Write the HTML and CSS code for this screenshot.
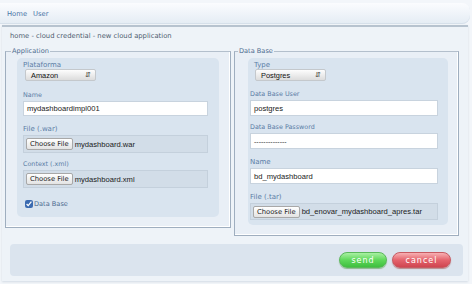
FILE: index.html
```html
<!DOCTYPE html>
<html lang="en">
<head>
    <meta charset="UTF-8">
    <title>New cloud application</title>
    <link rel="stylesheet" href="styles.css">
</head>
<body>
    <div class="menu">
        <a href="#">Home</a>
        <a href="#">User</a>
    </div>
    <div class="page">
        <div class="crumbs">home - cloud credential - new cloud application</div>
        <div class="columns">
            <fieldset class="box box-app">
                <legend>Application</legend>
                <div class="panel">
                    <label class="lbl big">Plataforma</label>
                    <div class="select"><span>Amazon</span><i>&#8693;</i></div>
                    <label class="lbl">Name</label>
                    <div class="input">mydashboardimpl001</div>
                    <label class="lbl big">File (.war)</label>
                    <div class="file"><button>Choose File</button><span>mydashboard.war</span></div>
                    <label class="lbl">Context (.xml)</label>
                    <div class="file"><button>Choose File</button><span>mydashboard.xml</span></div>
                    <label class="check"><input type="checkbox" checked><span>Data Base</span></label>
                </div>
            </fieldset>
            <fieldset class="box box-db">
                <legend>Data Base</legend>
                <div class="panel">
                    <label class="lbl big">Type</label>
                    <div class="select"><span>Postgres</span><i>&#8693;</i></div>
                    <label class="lbl">Data Base User</label>
                    <div class="input">postgres</div>
                    <label class="lbl">Data Base Password</label>
                    <div class="input pwd">--------------</div>
                    <label class="lbl big">Name</label>
                    <div class="input">bd_mydashboard</div>
                    <label class="lbl big">File (.tar)</label>
                    <div class="file"><button>Choose File</button><span>bd_enovar_mydashboard_apres.tar</span></div>
                </div>
            </fieldset>
        </div>
        <div class="actions">
            <button class="btn btn-send">send</button>
            <button class="btn btn-cancel">cancel</button>
        </div>
    </div>
</body>
</html>
```

FILE: styles.css
```css
/* base */
*{margin:0;padding:0;box-sizing:border-box}
body{font-family:'DejaVu Sans',Verdana,sans-serif;background:#f3f6fa;color:#333;width:472px;height:284px;overflow:hidden}
/* top menu */
.menu{height:21px;margin:3px 2px 0 0;background:linear-gradient(#fbfcfe,#e4ecf4);border-radius:0 8px 8px 0;box-shadow:inset 0 -1px 0 #d6e0ea;display:flex;align-items:center;gap:6px;padding-left:7px}
.menu a{color:#4a74a6;font-size:6.8px;text-decoration:none}
.page{margin:1px 4px 0 2px;border-top:2px solid #b7c3cf;background:#eef3f8;height:256px;box-shadow:0 1px 2px #d2dae3}
.crumbs{font-size:6.8px;color:#4f5d70;padding:5px 0 0 8px;height:20px}
/* two fieldsets */
.columns{display:flex;align-items:flex-start;gap:3px;padding-left:3px}
.box{border:1px solid #9faebf;border-top-color:#b3bfcc;box-shadow:inset -1px -1px 0 #fff;background:#e9eff6;padding:0}
.box legend{font-size:6.6px;color:#4e6c8f;margin-left:5px;padding:0 1px}
.box-app{width:226px;height:181px}
.box-db{width:225px;height:189px}
.box-db legend{margin-left:3px}
.box-app .panel{margin:3px 11px 0 11px}
.box-db .panel{margin:3px 10px 0 13px}
.panel{background:#d9e4ef;border-radius:5px;padding:2px 11px 9px 6px;display:flex;flex-direction:column;align-items:flex-start}
.box-db .panel{padding:3px 10px 5px 2px}
.lbl{font-size:6.4px;color:#5b7da6;margin:7px 0 2px 0;display:block;line-height:8px}
.lbl.big{font-size:7px;margin-top:9px}
.select+.lbl{margin-top:10px}
.panel .lbl:first-child{margin:1px 0 0 0}
.box-db .panel .lbl:first-child{margin:0 0 0 4px}
.box-db .select{margin-left:5px}
.box-db .select+.lbl{margin-top:9px}
/* fake select */
.select{width:71px;height:12px;margin-left:2px;background:linear-gradient(#fdfdfd,#dcdcdc);border:1px solid #c4c8cc;border-radius:2px;display:flex;align-items:center;justify-content:space-between;padding:0 4px 0 5px;font-family:'Liberation Sans',Arial,sans-serif;font-size:7.4px;color:#111}
.select i{font-style:normal;font-size:7px;color:#333}
/* text inputs */
.input{width:100%;height:16px;background:#fff;border:1px solid #c8d3de;font-family:'Liberation Sans',Arial,sans-serif;font-size:7.6px;color:#1a1a1a;padding:0 3px;display:flex;align-items:center}
.box-app .input{height:15px}
.input.pwd{font-size:7px;color:#333}
/* file inputs */
.file{width:100%;height:18px;background:#d2dde8;border:1px solid #c4d0dc;display:flex;align-items:center;padding-left:2px;gap:2px;font-family:'Liberation Sans',Arial,sans-serif;font-size:7.6px;color:#1a1a1a}
.box-db .file{height:17px}
.file button{font-family:'DejaVu Sans',sans-serif;font-size:6.8px;color:#222;height:12px;padding:0 3px;background:linear-gradient(#fff,#e3e3e3);border:1px solid #a8a8a8;border-radius:2px}
/* checkbox */
.check{display:flex;align-items:center;gap:1px;margin-top:10px;font-size:6.6px;color:#4e6c8f;height:12px}
.check input{width:8px;height:8px;margin-left:2px;accent-color:#3a6ab0}
.panel .check{margin-bottom:-2px}
/* action bar */
.actions{margin:8px 5px 0 8px;height:32px;background:#dbe4ee;border-radius:4px;display:flex;align-items:center;justify-content:flex-end;gap:5px;padding-right:12px}
.btn{height:16px;border-radius:8px;font-family:'DejaVu Sans',sans-serif;font-size:8px;color:#fff;letter-spacing:1px;border:1px solid transparent}
.btn-send{width:48px;background:linear-gradient(#a9f0a3,#5fd85a 50%,#3fbf3f);border-color:#5ab85a;box-shadow:0 1px 1px #8ab88a}
.btn-cancel{width:59px;background:linear-gradient(#f7b0b3,#e5646d 50%,#cf4550);border-color:#c75a62;box-shadow:0 1px 1px #b88a8a}
```
